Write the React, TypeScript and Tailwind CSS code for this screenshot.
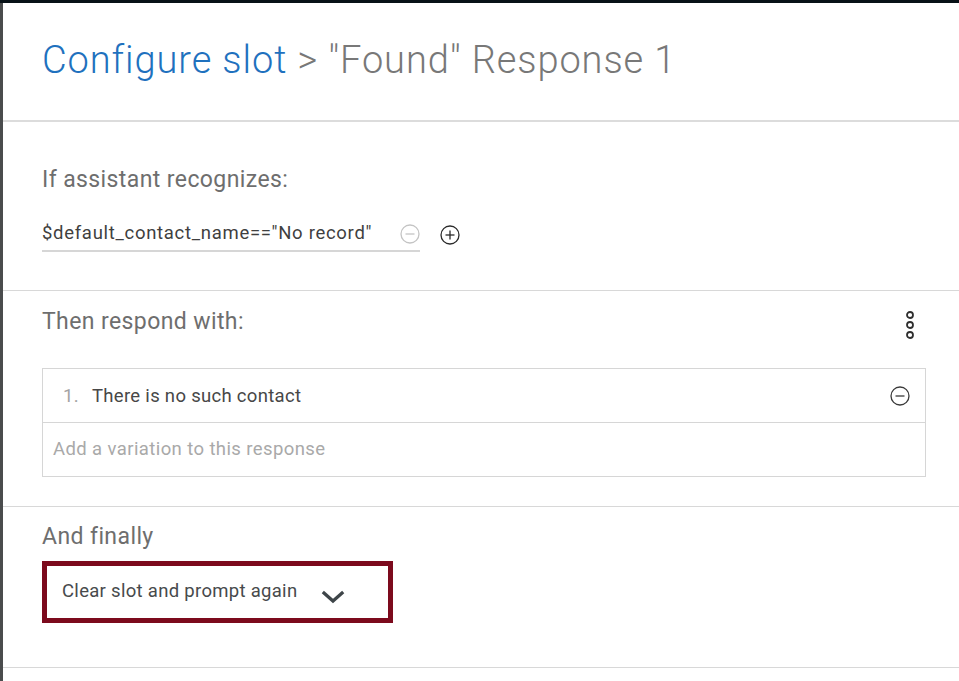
import React from 'react';

const font = { fontFamily: 'Roboto, "Noto Sans", sans-serif' };

// 丸の中にマイナス
function MinusCircle({ color }: { color: string }) {
  return (
    <svg width="20" height="20" viewBox="0 0 20 20" fill="none" stroke={color} strokeWidth="1.3">
      <circle cx="10" cy="10" r="9" />
      <line x1="5.5" y1="10" x2="14.5" y2="10" />
    </svg>
  );
}

function PlusCircle({ color }: { color: string }) {
  return (
    <svg width="20" height="20" viewBox="0 0 20 20" fill="none" stroke={color} strokeWidth="1.3">
      <circle cx="10" cy="10" r="9" />
      <line x1="5.5" y1="10" x2="14.5" y2="10" />
      <line x1="10" y1="5.5" x2="10" y2="14.5" />
    </svg>
  );
}

function Kebab() {
  return (
    <svg width="10" height="30" viewBox="0 0 10 30" fill="none" stroke="#2f2f2f" strokeWidth="1.8">
      <circle cx="5" cy="5" r="3" />
      <circle cx="5" cy="15" r="3" />
      <circle cx="5" cy="25" r="3" />
    </svg>
  );
}

function Chevron() {
  return (
    <svg width="24" height="14" viewBox="0 0 24 14" fill="none" stroke="#3e4549" strokeWidth="3.2" strokeLinecap="square">
      <polyline points="3,3 12,11 21,3" />
    </svg>
  );
}

export default function App() {
  return (
    <div className="w-[959px] h-[681px] overflow-hidden bg-[#071117] flex flex-col" style={font}>
      <div className="h-[3px] shrink-0" />
      <div className="flex flex-1">
        <div className="w-[3px] bg-[#4a4c4d] shrink-0" />
        <div className="flex-1 bg-white">
          {/* ヘッダー */}
          <div className="h-[119px] flex items-center pl-[39px] pb-[4px] border-b-2 border-[#dcdcdc]">
            <h1 className="text-[38px] font-light leading-none tracking-[0.9px]">
              <span className="text-[#1f71be]">Configure slot</span>
              <span className="text-[#787878]"> &gt; "Found" Response 1</span>
            </h1>
          </div>

          {/* 条件 */}
          <div className="h-[169px] pl-[39px] pt-[44px] border-b border-[#d8d8d8]">
            <div className="text-[23px] leading-[28px] tracking-[0.4px] text-[#6e6e6e]">If assistant recognizes:</div>
            <div className="mt-[24px] flex items-center gap-[20px]">
              <div className="w-[378px] h-[34px] flex items-center justify-between border-b-2 border-[#d6d6d6]">
                <span className="text-[18.5px] tracking-[0.7px] text-[#3f3f3f]">$default_contact_name=="No record"</span>
                <MinusCircle color="#c4c4c4" />
              </div>
              <PlusCircle color="#2a2a2a" />
            </div>
          </div>

          {/* 応答 */}
          <div className="h-[216px] pl-[39px] pr-[33px] pt-[17px] border-b border-[#d8d8d8]">
            <div className="h-[28px] flex items-center justify-between">
              <span className="text-[23px] tracking-[0.4px] text-[#6e6e6e]">Then respond with:</span>
              <div className="mr-[11px] mt-[6px]">
                <Kebab />
              </div>
            </div>
            <div className="mt-[32px] border border-[#d6d6d6]">
              <div className="h-[54px] flex items-center justify-between pl-[20px] pr-[15px] border-b border-[#d6d6d6]">
                <div className="flex items-center text-[18.5px] tracking-[0.3px] pt-[3px]">
                  <span className="w-[29px] text-[#a3a3a3]">1.</span>
                  <span className="text-[#474747]">There is no such contact</span>
                </div>
                <MinusCircle color="#3a3a3a" />
              </div>
              <div className="h-[53px] flex items-center pl-[10px] text-[18.5px] tracking-[0.4px] text-[#a9a9a9]">
                Add a variation to this response
              </div>
            </div>
          </div>

          {/* 最後に */}
          <div className="h-[161px] pl-[39px] pt-[16px] border-b border-[#d8d8d8]">
            <div className="text-[23px] leading-[28px] tracking-[0.4px] text-[#6e6e6e]">And finally</div>
            <div className="mt-[10px] w-[351px] h-[62px] border-[5px] border-[#7c0a1d] flex items-center pl-[15px]">
              <span className="text-[18.5px] tracking-[0.3px] text-[#474a4c]">Clear slot and prompt again</span>
              <div className="ml-[24px] mt-[10px]">
                <Chevron />
              </div>
            </div>
          </div>
        </div>
      </div>
    </div>
  );
}
